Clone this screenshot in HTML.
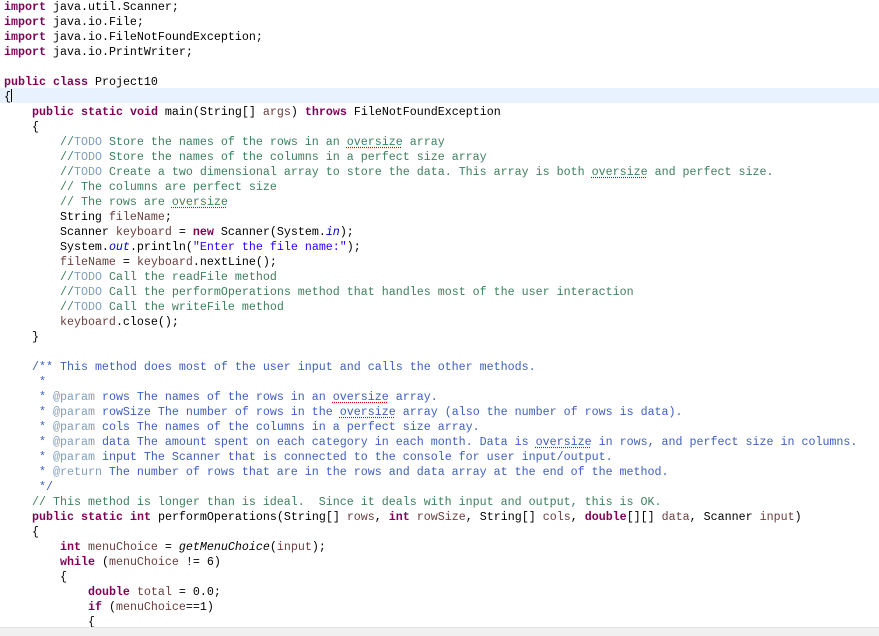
<!DOCTYPE html>
<html><head><meta charset="utf-8"><style>
html,body{margin:0;padding:0;background:#fff;width:879px;height:636px;overflow:hidden;position:relative}
pre{margin:0;position:absolute;left:4px;top:0px;font-family:"Liberation Mono",monospace;font-size:11.67px;line-height:15px;color:#000;white-space:pre}
.k{color:#7f0055;font-weight:bold}
.c{color:#3f7f5f}
.t{color:#7f9fbf}
.j{color:#3f5fbf}
.p{color:#7f9fbf}
.s{color:#2a00ff}
.f{color:#0000c0;font-style:italic}
.v{color:#6a3e3e}
.i{font-style:italic}
.u{text-decoration:underline dotted #d00;text-underline-offset:2px}
#hl{position:absolute;left:0;top:88px;width:879px;height:15px;background:#e8f2fe}
#cur{position:absolute;left:11px;top:89px;width:1px;height:13px;background:#000}
#sb{position:absolute;left:0;top:627px;width:879px;height:9px;background:#f0f0f0;border-top:1px solid #e3e3e3}
</style></head><body>
<div id="hl"></div><div id="cur"></div>
<pre><span class="k">import</span> java.util.Scanner;
<span class="k">import</span> java.io.File;
<span class="k">import</span> java.io.FileNotFoundException;
<span class="k">import</span> java.io.PrintWriter;

<span class="k">public</span> <span class="k">class</span> Project10
{
    <span class="k">public</span> <span class="k">static</span> <span class="k">void</span> main(String[] <span class="v">args</span>) <span class="k">throws</span> FileNotFoundException
    {
        <span class="c">//</span><span class="t">TODO</span><span class="c"> Store the names of the rows in an <span class="u">oversize</span> array</span>
        <span class="c">//</span><span class="t">TODO</span><span class="c"> Store the names of the columns in a perfect size array</span>
        <span class="c">//</span><span class="t">TODO</span><span class="c"> Create a two dimensional array to store the data. This array is both <span class="u">oversize</span> and perfect size.</span>
        <span class="c">// The columns are perfect size</span>
        <span class="c">// The rows are <span class="u">oversize</span></span>
        String <span class="v">fileName</span>;
        Scanner <span class="v">keyboard</span> = <span class="k">new</span> Scanner(System.<span class="f">in</span>);
        System.<span class="f">out</span>.println(<span class="s">"Enter the file name:"</span>);
        <span class="v">fileName</span> = <span class="v">keyboard</span>.nextLine();
        <span class="c">//</span><span class="t">TODO</span><span class="c"> Call the readFile method</span>
        <span class="c">//</span><span class="t">TODO</span><span class="c"> Call the performOperations method that handles most of the user interaction</span>
        <span class="c">//</span><span class="t">TODO</span><span class="c"> Call the writeFile method</span>
        <span class="v">keyboard</span>.close();
    }

    <span class="j">/** This method does most of the user input and calls the other methods.</span>
<span class="j">     *</span>
<span class="j">     * <span class="p">@param</span> rows The names of the rows in an <span class="u">oversize</span> array.</span>
<span class="j">     * <span class="p">@param</span> rowSize The number of rows in the <span class="u">oversize</span> array (also the number of rows is data).</span>
<span class="j">     * <span class="p">@param</span> cols The names of the columns in a perfect size array.</span>
<span class="j">     * <span class="p">@param</span> data The amount spent on each category in each month. Data is <span class="u">oversize</span> in rows, and perfect size in columns.</span>
<span class="j">     * <span class="p">@param</span> input The Scanner that is connected to the console for user input/output.</span>
<span class="j">     * <span class="p">@return</span> The number of rows that are in the rows and data array at the end of the method.</span>
<span class="j">     */</span>
    <span class="c">// This method is longer than is ideal.  Since it deals with input and output, this is OK.</span>
    <span class="k">public</span> <span class="k">static</span> <span class="k">int</span> performOperations(String[] <span class="v">rows</span>, <span class="k">int</span> <span class="v">rowSize</span>, String[] <span class="v">cols</span>, <span class="k">double</span>[][] <span class="v">data</span>, Scanner <span class="v">input</span>)
    {
        <span class="k">int</span> <span class="v">menuChoice</span> = <span class="i">getMenuChoice</span>(<span class="v">input</span>);
        <span class="k">while</span> (<span class="v">menuChoice</span> != 6)
        {
            <span class="k">double</span> <span class="v">total</span> = 0.0;
            <span class="k">if</span> (<span class="v">menuChoice</span>==1)
            {
</pre>
<div id="sb"></div>
</body></html>
